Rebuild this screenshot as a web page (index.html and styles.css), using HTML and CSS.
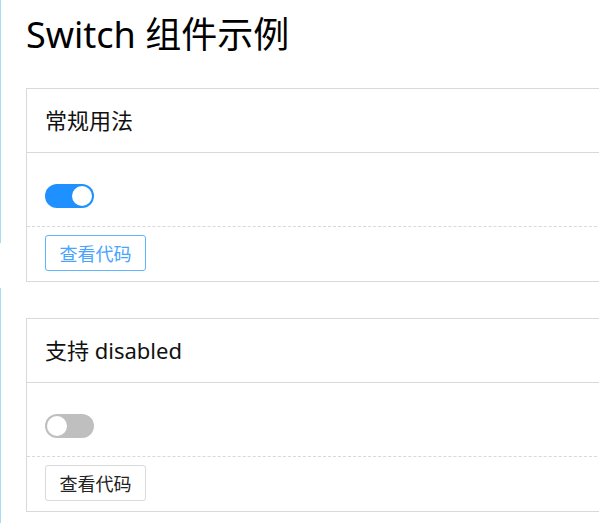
FILE: index.html
```html
<!DOCTYPE html>
<html lang="zh">
<head>
<meta charset="utf-8">
<title>Switch 组件示例</title>
<link rel="stylesheet" href="styles.css">
</head>
<body>
<div class="rail">
  <span class="rail-seg rail-top"></span>
  <span class="rail-seg rail-bottom"></span>
</div>
<main class="page">
  <h1 class="title">Switch 组件示例</h1>

  <section class="card">
    <div class="card-head">常规用法</div>
    <div class="card-body">
      <span class="switch switch-on"><span class="knob"></span></span>
    </div>
    <div class="card-foot">
      <button class="btn btn-active">查看代码</button>
    </div>
  </section>

  <section class="card">
    <div class="card-head">支持 disabled</div>
    <div class="card-body">
      <span class="switch switch-disabled"><span class="knob"></span></span>
    </div>
    <div class="card-foot">
      <button class="btn">查看代码</button>
    </div>
  </section>
</main>
</body>
</html>
```

FILE: styles.css
```css
html, body {
  margin: 0;
  padding: 0;
  overflow: hidden;
  background: #ffffff;
}

body {
  font-family: "Noto Sans", "Noto Sans CJK SC", sans-serif;
  color: #111;
  height: 523px;
}

.rail {
  position: absolute;
  left: 0;
  top: 0;
  width: 1px;
  height: 523px;
}

.rail-seg {
  position: absolute;
  left: 0;
  width: 1px;
  background: #a9dcee;
}

.rail-top { top: 0; height: 243px; }
.rail-bottom { top: 288px; height: 235px; }

.page {
  padding: 0 0 0 26px;
}

.title {
  margin: 0;
  padding-top: 10px;
  font-size: 36px;
  font-weight: 400;
  line-height: 50px;
  height: 78px;
  color: #000;
}

.card {
  width: 600px;
  border: 1px solid #d9d9d9;
  margin-bottom: 36px;
}

.card-head {
  height: 63px;
  line-height: 63px;
  padding-left: 18px;
  font-size: 22px;
  color: #111;
  border-bottom: 1px solid #d9d9d9;
}

.card-body {
  height: 73px;
  padding-left: 18px;
  border-bottom: 1px dashed #d9d9d9;
  display: flex;
  align-items: flex-start;
}

.switch {
  margin-top: 31px;
  width: 49px;
  height: 24px;
  border-radius: 12px;
  display: flex;
  align-items: center;
  box-sizing: border-box;
  padding: 2px;
}

.switch-on {
  background: #1e90ff;
  justify-content: flex-end;
}

.switch-disabled {
  background: #bfbfbf;
  justify-content: flex-start;
}

.knob {
  width: 20px;
  height: 20px;
  border-radius: 50%;
  background: #fff;
}

.card-foot {
  padding: 8px 0 10px 18px;
}

.btn {
  display: block;
  width: 101px;
  height: 36px;
  padding: 0;
  margin: 0;
  border: 1px solid #d9d9d9;
  border-radius: 3px;
  background: #fff;
  font-family: "Noto Sans CJK SC", sans-serif;
  font-size: 18px;
  color: #222;
}

.btn-active {
  border-color: #5fb4ff;
  color: #4aa4ff;
}
```
